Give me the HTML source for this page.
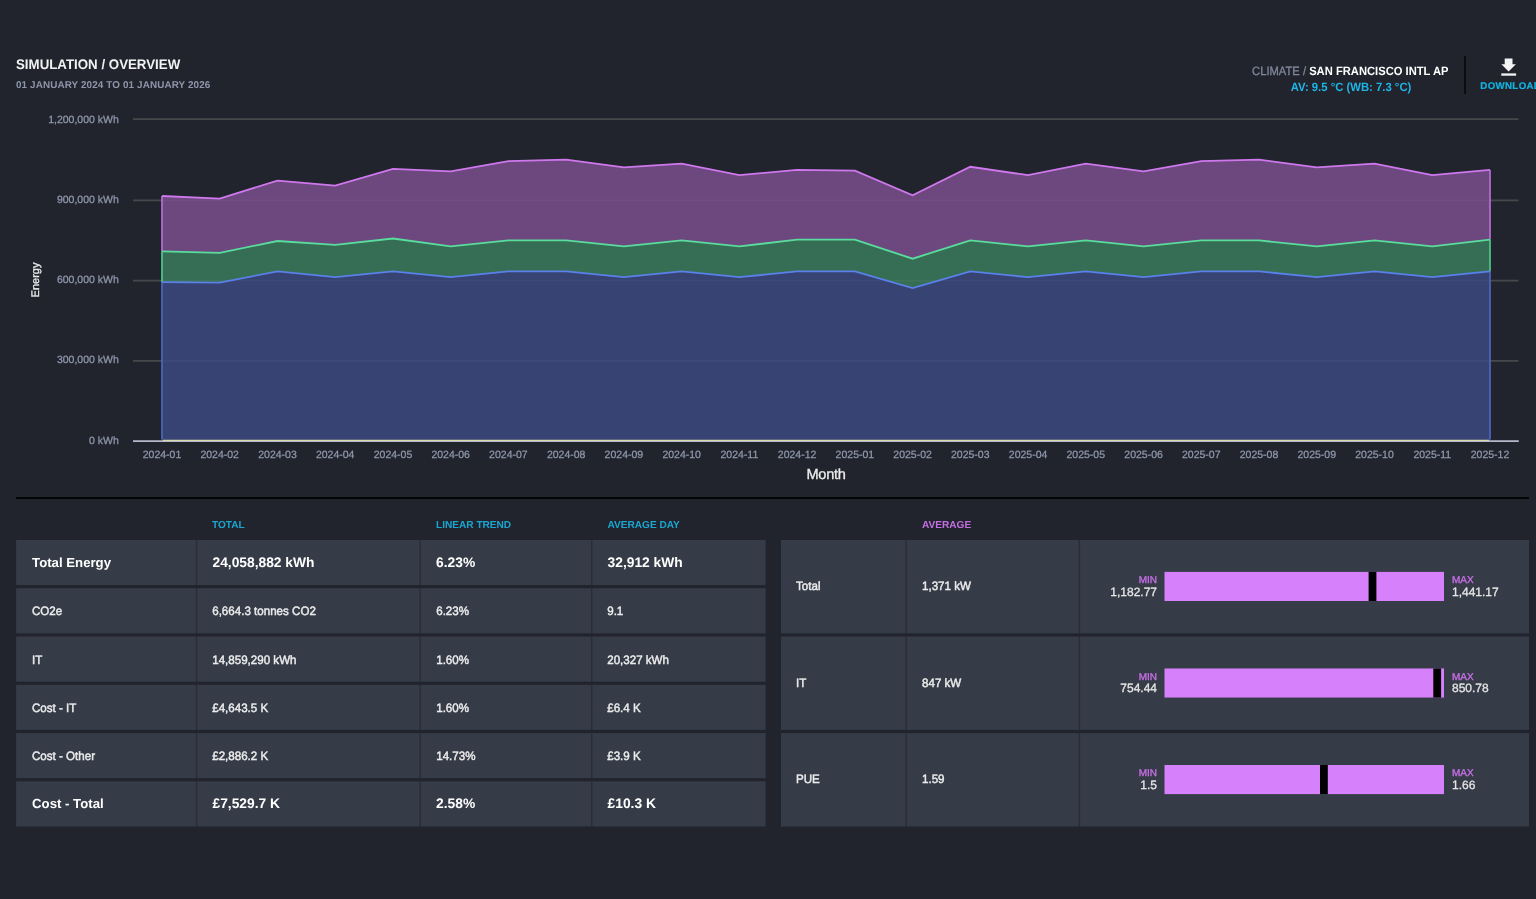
<!DOCTYPE html>
<html><head><meta charset="utf-8"><title>Simulation Overview</title>
<style>
html,body{margin:0;padding:0}
body{width:1536px;height:899px;overflow:hidden;background:#21242c;font-family:"Liberation Sans",sans-serif;color:#fff;position:relative;text-rendering:geometricPrecision}
div{position:absolute;white-space:nowrap}
#w{left:0;top:0;width:1536px;height:899px;will-change:transform}
.title{left:16px;top:54.6px;font-size:13.9px;transform:scaleX(.957);transform-origin:0 0;font-weight:bold;color:#f2f2f2;line-height:18px}
.sub{left:16px;top:79.8px;font-size:9.9px;font-weight:bold;color:#8e96ab;letter-spacing:.12px;line-height:12px}
.clim{right:87.5px;top:63.9px;transform:scaleX(.933);transform-origin:100% 0;font-size:12px;line-height:14px;color:#7e8598;text-align:right}
.clim{-webkit-text-stroke:.3px #838a9f}.clim b{color:#fff;-webkit-text-stroke:0}
.av{left:1285.5px;top:79.7px;transform:scaleX(.942);font-size:12px;line-height:14px;color:#1fb4e6;font-weight:bold;width:130px;text-align:center}
.vdiv{left:1464px;top:56px;width:2px;height:38px;background:#0c0d11}
.dl{left:1480.3px;top:80.8px;font-size:9.7px;line-height:12px;font-weight:bold;color:#12b3e3;letter-spacing:.35px;-webkit-text-stroke:.2px #12b3e3}
.yl{left:0;width:118.8px;text-align:right;font-size:10.5px;line-height:14px;color:#9098ad;-webkit-text-stroke:.25px #9098ad}
.xl{top:447.7px;width:60px;text-align:center;font-size:10.5px;line-height:14px;color:#9098ad;-webkit-text-stroke:.25px #9098ad}
.energy{left:6px;top:272px;width:60px;text-align:center;font-size:11px;line-height:16px;color:#eee;-webkit-text-stroke:.3px #eee;transform:rotate(-90deg)}
.month{left:776px;top:466.4px;width:100px;text-align:center;font-size:14.6px;letter-spacing:-.3px;line-height:18px;color:#eee;-webkit-text-stroke:.3px #eee}
.hr{left:16px;top:496.5px;width:1513px;height:2px;background:#050506}
.th{top:520px;font-size:10.1px;line-height:12px;font-weight:bold;letter-spacing:0;color:#1ba6d2}
.cell{box-sizing:border-box;padding-left:16.8px;font-size:12.2px;transform:scaleX(.95);transform-origin:0 0;color:#ececec;-webkit-text-stroke:.45px #ececec}
.cell.b{font-size:13.8px;font-weight:bold;color:#fff;-webkit-text-stroke:0;transform:none;padding-left:16px}
.cell.b.c0{font-size:13.2px}
.cell.c1,.cell.c2,.cell.c3{padding-left:16px}
.cell.b.c1,.cell.b.c2,.cell.b.c3{padding-left:15.2px}
.cell.r{padding-left:15.8px}
.bar{left:1164.5px;width:279.5px;height:29px;background:#d680fb}
.mk{width:8px;height:29px;background:#000}
.mm{font-size:12px;line-height:11.2px;color:#e6e6e6;-webkit-text-stroke:.3px #e6e6e6}
.mm span{font-size:10px;color:#c76fe6;-webkit-text-stroke:.35px #c76fe6}
</style></head><body><div id="w">
<div class="title">SIMULATION / OVERVIEW</div>
<div class="sub">01 JANUARY 2024 TO 01 JANUARY 2026</div>
<div class="clim">CLIMATE / <b>SAN FRANCISCO INTL AP</b></div>
<div class="av">AV: 9.5 °C (WB: 7.3 °C)</div>
<div class="vdiv"></div>
<svg width="24" height="24" viewBox="1496 54 24 24" style="position:absolute;left:1496px;top:54px"><path d="M1504.7 58.4H1512.5V64.3H1515.9L1508.6 71.6L1501.4 64.3H1504.7Z" fill="#f4f4f4"/><rect x="1501.3" y="73.4" width="14.8" height="2.3" fill="#f4f4f4"/></svg>
<div class="dl">DOWNLOAD</div>
<svg id="chart" width="1536" height="500" viewBox="0 0 1536 500" style="position:absolute;left:0;top:0"><line x1="133" x2="1518.5" y1="119.2" y2="119.2" stroke="#46484c" stroke-width="1.8"/><line x1="133" x2="1518.5" y1="200.4" y2="200.4" stroke="#46484c" stroke-width="1.8"/><line x1="133" x2="1518.5" y1="280.6" y2="280.6" stroke="#46484c" stroke-width="1.8"/><line x1="133" x2="1518.5" y1="360.9" y2="360.9" stroke="#46484c" stroke-width="1.8"/><polygon points="162.0,282.2 219.7,282.6 277.5,271.4 335.2,277.1 393.0,271.4 450.7,277.2 508.4,271.4 566.2,271.4 623.9,277.2 681.7,271.4 739.4,277.2 797.1,271.4 854.9,271.4 912.6,288.0 970.3,271.4 1028.1,277.2 1085.8,271.4 1143.6,277.2 1201.3,271.4 1259.0,271.4 1316.8,277.2 1374.5,271.4 1432.3,277.2 1490.0,271.4 1490.0,441.0 162.0,441.0" fill="#3b4a82" fill-opacity="0.82"/><polygon points="162.0,251.3 219.7,252.9 277.5,241.0 335.2,244.9 393.0,238.5 450.7,246.4 508.4,240.4 566.2,240.4 623.9,246.4 681.7,240.4 739.4,246.4 797.1,239.6 854.9,239.6 912.6,258.7 970.3,240.4 1028.1,246.4 1085.8,240.4 1143.6,246.4 1201.3,240.4 1259.0,240.4 1316.8,246.4 1374.5,240.4 1432.3,246.4 1490.0,239.6 1490.0,271.4 1432.3,277.2 1374.5,271.4 1316.8,277.2 1259.0,271.4 1201.3,271.4 1143.6,277.2 1085.8,271.4 1028.1,277.2 970.3,271.4 912.6,288.0 854.9,271.4 797.1,271.4 739.4,277.2 681.7,271.4 623.9,277.2 566.2,271.4 508.4,271.4 450.7,277.2 393.0,271.4 335.2,277.1 277.5,271.4 219.7,282.6 162.0,282.2" fill="#3a7a5c" fill-opacity="0.86"/><polygon points="162.0,196.0 219.7,198.6 277.5,180.6 335.2,185.7 393.0,168.9 450.7,171.4 508.4,161.1 566.2,159.7 623.9,167.3 681.7,163.6 739.4,175.2 797.1,169.9 854.9,170.7 912.6,195.3 970.3,166.8 1028.1,175.2 1085.8,163.6 1143.6,171.4 1201.3,161.1 1259.0,159.7 1316.8,167.3 1374.5,163.6 1432.3,175.2 1490.0,169.9 1490.0,239.6 1432.3,246.4 1374.5,240.4 1316.8,246.4 1259.0,240.4 1201.3,240.4 1143.6,246.4 1085.8,240.4 1028.1,246.4 970.3,240.4 912.6,258.7 854.9,239.6 797.1,239.6 739.4,246.4 681.7,240.4 623.9,246.4 566.2,240.4 508.4,240.4 450.7,246.4 393.0,238.5 335.2,244.9 277.5,241.0 219.7,252.9 162.0,251.3" fill="#7a4f8e" fill-opacity="0.85"/><line x1="162.0" x2="162.0" y1="282.2" y2="439.6" stroke="#4d66c2" stroke-width="1.7"/><line x1="162.0" x2="162.0" y1="251.3" y2="282.2" stroke="#50c88e" stroke-width="1.7"/><line x1="162.0" x2="162.0" y1="196.0" y2="251.3" stroke="#b86dd8" stroke-width="1.7"/><line x1="1490.0" x2="1490.0" y1="271.4" y2="439.6" stroke="#4d66c2" stroke-width="1.7"/><line x1="1490.0" x2="1490.0" y1="239.6" y2="271.4" stroke="#50c88e" stroke-width="1.7"/><line x1="1490.0" x2="1490.0" y1="169.9" y2="239.6" stroke="#b86dd8" stroke-width="1.7"/><polyline points="162.0,282.2 219.7,282.6 277.5,271.4 335.2,277.1 393.0,271.4 450.7,277.2 508.4,271.4 566.2,271.4 623.9,277.2 681.7,271.4 739.4,277.2 797.1,271.4 854.9,271.4 912.6,288.0 970.3,271.4 1028.1,277.2 1085.8,271.4 1143.6,277.2 1201.3,271.4 1259.0,271.4 1316.8,277.2 1374.5,271.4 1432.3,277.2 1490.0,271.4" fill="none" stroke="#5a80ea" stroke-width="1.8"/><polyline points="162.0,251.3 219.7,252.9 277.5,241.0 335.2,244.9 393.0,238.5 450.7,246.4 508.4,240.4 566.2,240.4 623.9,246.4 681.7,240.4 739.4,246.4 797.1,239.6 854.9,239.6 912.6,258.7 970.3,240.4 1028.1,246.4 1085.8,240.4 1143.6,246.4 1201.3,240.4 1259.0,240.4 1316.8,246.4 1374.5,240.4 1432.3,246.4 1490.0,239.6" fill="none" stroke="#5adc9c" stroke-width="1.8"/><polyline points="162.0,196.0 219.7,198.6 277.5,180.6 335.2,185.7 393.0,168.9 450.7,171.4 508.4,161.1 566.2,159.7 623.9,167.3 681.7,163.6 739.4,175.2 797.1,169.9 854.9,170.7 912.6,195.3 970.3,166.8 1028.1,175.2 1085.8,163.6 1143.6,171.4 1201.3,161.1 1259.0,159.7 1316.8,167.3 1374.5,163.6 1432.3,175.2 1490.0,169.9" fill="none" stroke="#cf78ee" stroke-width="1.8"/><line x1="133" x2="1518.8" y1="441.2" y2="441.2" stroke="#b4b8cb" stroke-width="1.8"/><line x1="163.0" x2="1489.0" y1="440.3" y2="440.3" stroke="#dbd8ac" stroke-width="1.3"/></svg>
<div class="yl" style="top:113px">1,200,000 kWh</div><div class="yl" style="top:193px">900,000 kWh</div><div class="yl" style="top:273px">600,000 kWh</div><div class="yl" style="top:353px">300,000 kWh</div><div class="yl" style="top:434px">0 kWh</div>
<div class="xl" style="left:132.0px">2024-01</div><div class="xl" style="left:189.7px">2024-02</div><div class="xl" style="left:247.5px">2024-03</div><div class="xl" style="left:305.2px">2024-04</div><div class="xl" style="left:363.0px">2024-05</div><div class="xl" style="left:420.7px">2024-06</div><div class="xl" style="left:478.4px">2024-07</div><div class="xl" style="left:536.2px">2024-08</div><div class="xl" style="left:593.9px">2024-09</div><div class="xl" style="left:651.7px">2024-10</div><div class="xl" style="left:709.4px">2024-11</div><div class="xl" style="left:767.1px">2024-12</div><div class="xl" style="left:824.9px">2025-01</div><div class="xl" style="left:882.6px">2025-02</div><div class="xl" style="left:940.3px">2025-03</div><div class="xl" style="left:998.1px">2025-04</div><div class="xl" style="left:1055.8px">2025-05</div><div class="xl" style="left:1113.6px">2025-06</div><div class="xl" style="left:1171.3px">2025-07</div><div class="xl" style="left:1229.0px">2025-08</div><div class="xl" style="left:1286.8px">2025-09</div><div class="xl" style="left:1344.5px">2025-10</div><div class="xl" style="left:1402.3px">2025-11</div><div class="xl" style="left:1460.0px">2025-12</div>
<div class="energy">Energy</div>
<div class="month">Month</div>
<div class="hr"></div>
<div class="th" style="left:212px">TOTAL</div>
<div class="th" style="left:436px">LINEAR TREND</div>
<div class="th" style="left:607.5px">AVERAGE DAY</div>
<div class="th" style="left:922px;color:#c36fe2">AVERAGE</div>
<svg width="1536" height="899" viewBox="0 0 1536 899" style="position:absolute;left:0;top:0"><rect x="16.10" y="540.00" width="749.50" height="45.07" fill="#2a2d38"/><rect x="16.10" y="540.00" width="179.80" height="45.07" fill="#353b47"/><rect x="197.30" y="540.00" width="222.20" height="45.07" fill="#353b47"/><rect x="420.90" y="540.00" width="170.10" height="45.07" fill="#353b47"/><rect x="592.40" y="540.00" width="173.20" height="45.07" fill="#353b47"/><rect x="16.10" y="588.27" width="749.50" height="45.07" fill="#2a2d38"/><rect x="16.10" y="588.27" width="179.80" height="45.07" fill="#353b47"/><rect x="197.30" y="588.27" width="222.20" height="45.07" fill="#353b47"/><rect x="420.90" y="588.27" width="170.10" height="45.07" fill="#353b47"/><rect x="592.40" y="588.27" width="173.20" height="45.07" fill="#353b47"/><rect x="16.10" y="636.55" width="749.50" height="45.07" fill="#2a2d38"/><rect x="16.10" y="636.55" width="179.80" height="45.07" fill="#353b47"/><rect x="197.30" y="636.55" width="222.20" height="45.07" fill="#353b47"/><rect x="420.90" y="636.55" width="170.10" height="45.07" fill="#353b47"/><rect x="592.40" y="636.55" width="173.20" height="45.07" fill="#353b47"/><rect x="16.10" y="684.83" width="749.50" height="45.07" fill="#2a2d38"/><rect x="16.10" y="684.83" width="179.80" height="45.07" fill="#353b47"/><rect x="197.30" y="684.83" width="222.20" height="45.07" fill="#353b47"/><rect x="420.90" y="684.83" width="170.10" height="45.07" fill="#353b47"/><rect x="592.40" y="684.83" width="173.20" height="45.07" fill="#353b47"/><rect x="16.10" y="733.10" width="749.50" height="45.07" fill="#2a2d38"/><rect x="16.10" y="733.10" width="179.80" height="45.07" fill="#353b47"/><rect x="197.30" y="733.10" width="222.20" height="45.07" fill="#353b47"/><rect x="420.90" y="733.10" width="170.10" height="45.07" fill="#353b47"/><rect x="592.40" y="733.10" width="173.20" height="45.07" fill="#353b47"/><rect x="16.10" y="781.38" width="749.50" height="45.07" fill="#2a2d38"/><rect x="16.10" y="781.38" width="179.80" height="45.07" fill="#353b47"/><rect x="197.30" y="781.38" width="222.20" height="45.07" fill="#353b47"/><rect x="420.90" y="781.38" width="170.10" height="45.07" fill="#353b47"/><rect x="592.40" y="781.38" width="173.20" height="45.07" fill="#353b47"/><rect x="781.00" y="540.00" width="748.00" height="93.35" fill="#2a2d38"/><rect x="781.00" y="540.00" width="124.50" height="93.35" fill="#353b47"/><rect x="906.90" y="540.00" width="171.80" height="93.35" fill="#353b47"/><rect x="1080.10" y="540.00" width="448.90" height="93.35" fill="#353b47"/><rect x="1164.50" y="571.90" width="279.50" height="29.10" fill="#d680fb"/><rect x="1368.60" y="571.90" width="7.80" height="29.10" fill="#000"/><rect x="781.00" y="636.55" width="748.00" height="93.35" fill="#2a2d38"/><rect x="781.00" y="636.55" width="124.50" height="93.35" fill="#353b47"/><rect x="906.90" y="636.55" width="171.80" height="93.35" fill="#353b47"/><rect x="1080.10" y="636.55" width="448.90" height="93.35" fill="#353b47"/><rect x="1164.50" y="668.45" width="279.50" height="29.10" fill="#d680fb"/><rect x="1433.30" y="668.45" width="7.80" height="29.10" fill="#000"/><rect x="781.00" y="733.10" width="748.00" height="93.35" fill="#2a2d38"/><rect x="781.00" y="733.10" width="124.50" height="93.35" fill="#353b47"/><rect x="906.90" y="733.10" width="171.80" height="93.35" fill="#353b47"/><rect x="1080.10" y="733.10" width="448.90" height="93.35" fill="#353b47"/><rect x="1164.50" y="765.00" width="279.50" height="29.10" fill="#d680fb"/><rect x="1320.00" y="765.00" width="7.80" height="29.10" fill="#000"/></svg>
<div class="cell b c0" style="left:16.1px;top:540.0px;width:179.8px;height:45px;line-height:46.0px">Total Energy</div><div class="cell b c1" style="left:197.3px;top:540.0px;width:222.2px;height:45px;line-height:46.0px">24,058,882 kWh</div><div class="cell b c2" style="left:420.9px;top:540.0px;width:170.1px;height:45px;line-height:46.0px">6.23%</div><div class="cell b c3" style="left:592.4px;top:540.0px;width:173.2px;height:45px;line-height:46.0px">32,912 kWh</div><div class="cell c0" style="left:16.1px;top:588.3px;width:179.8px;height:45px;line-height:46.2px">CO2e</div><div class="cell c1" style="left:197.3px;top:588.3px;width:222.2px;height:45px;line-height:46.2px">6,664.3 tonnes CO2</div><div class="cell c2" style="left:420.9px;top:588.3px;width:170.1px;height:45px;line-height:46.2px">6.23%</div><div class="cell c3" style="left:592.4px;top:588.3px;width:173.2px;height:45px;line-height:46.2px">9.1</div><div class="cell c0" style="left:16.1px;top:636.5px;width:179.8px;height:45px;line-height:46.2px">IT</div><div class="cell c1" style="left:197.3px;top:636.5px;width:222.2px;height:45px;line-height:46.2px">14,859,290 kWh</div><div class="cell c2" style="left:420.9px;top:636.5px;width:170.1px;height:45px;line-height:46.2px">1.60%</div><div class="cell c3" style="left:592.4px;top:636.5px;width:173.2px;height:45px;line-height:46.2px">20,327 kWh</div><div class="cell c0" style="left:16.1px;top:684.8px;width:179.8px;height:45px;line-height:46.2px">Cost - IT</div><div class="cell c1" style="left:197.3px;top:684.8px;width:222.2px;height:45px;line-height:46.2px">£4,643.5 K</div><div class="cell c2" style="left:420.9px;top:684.8px;width:170.1px;height:45px;line-height:46.2px">1.60%</div><div class="cell c3" style="left:592.4px;top:684.8px;width:173.2px;height:45px;line-height:46.2px">£6.4 K</div><div class="cell c0" style="left:16.1px;top:733.1px;width:179.8px;height:45px;line-height:46.2px">Cost - Other</div><div class="cell c1" style="left:197.3px;top:733.1px;width:222.2px;height:45px;line-height:46.2px">£2,886.2 K</div><div class="cell c2" style="left:420.9px;top:733.1px;width:170.1px;height:45px;line-height:46.2px">14.73%</div><div class="cell c3" style="left:592.4px;top:733.1px;width:173.2px;height:45px;line-height:46.2px">£3.9 K</div><div class="cell b c0" style="left:16.1px;top:781.4px;width:179.8px;height:45px;line-height:46.0px">Cost - Total</div><div class="cell b c1" style="left:197.3px;top:781.4px;width:222.2px;height:45px;line-height:46.0px">£7,529.7 K</div><div class="cell b c2" style="left:420.9px;top:781.4px;width:170.1px;height:45px;line-height:46.0px">2.58%</div><div class="cell b c3" style="left:592.4px;top:781.4px;width:173.2px;height:45px;line-height:46.0px">£10.3 K</div>
<div class="cell r" style="left:781px;top:540.0px;width:124.5px;height:93.3px;line-height:93.2px">Total</div><div class="cell r" style="left:906.9px;top:540.0px;width:171.8px;height:93.3px;line-height:93.2px">1,371 kW</div><div class="cell r" style="left:1080.1px;top:540.0px;width:448.9px;height:93.3px;line-height:93.2px"></div><div class="mm" style="top:574.3px;right:379px;text-align:right"><span>MIN</span><br>1,182.77</div><div class="mm" style="top:574.3px;left:1452px"><span>MAX</span><br>1,441.17</div><div class="cell r" style="left:781px;top:636.5px;width:124.5px;height:93.3px;line-height:93.2px">IT</div><div class="cell r" style="left:906.9px;top:636.5px;width:171.8px;height:93.3px;line-height:93.2px">847 kW</div><div class="cell r" style="left:1080.1px;top:636.5px;width:448.9px;height:93.3px;line-height:93.2px"></div><div class="mm" style="top:670.8px;right:379px;text-align:right"><span>MIN</span><br>754.44</div><div class="mm" style="top:670.8px;left:1452px"><span>MAX</span><br>850.78</div><div class="cell r" style="left:781px;top:733.1px;width:124.5px;height:93.3px;line-height:93.2px">PUE</div><div class="cell r" style="left:906.9px;top:733.1px;width:171.8px;height:93.3px;line-height:93.2px">1.59</div><div class="cell r" style="left:1080.1px;top:733.1px;width:448.9px;height:93.3px;line-height:93.2px"></div><div class="mm" style="top:767.4px;right:379px;text-align:right"><span>MIN</span><br>1.5</div><div class="mm" style="top:767.4px;left:1452px"><span>MAX</span><br>1.66</div>
</div></body></html>
